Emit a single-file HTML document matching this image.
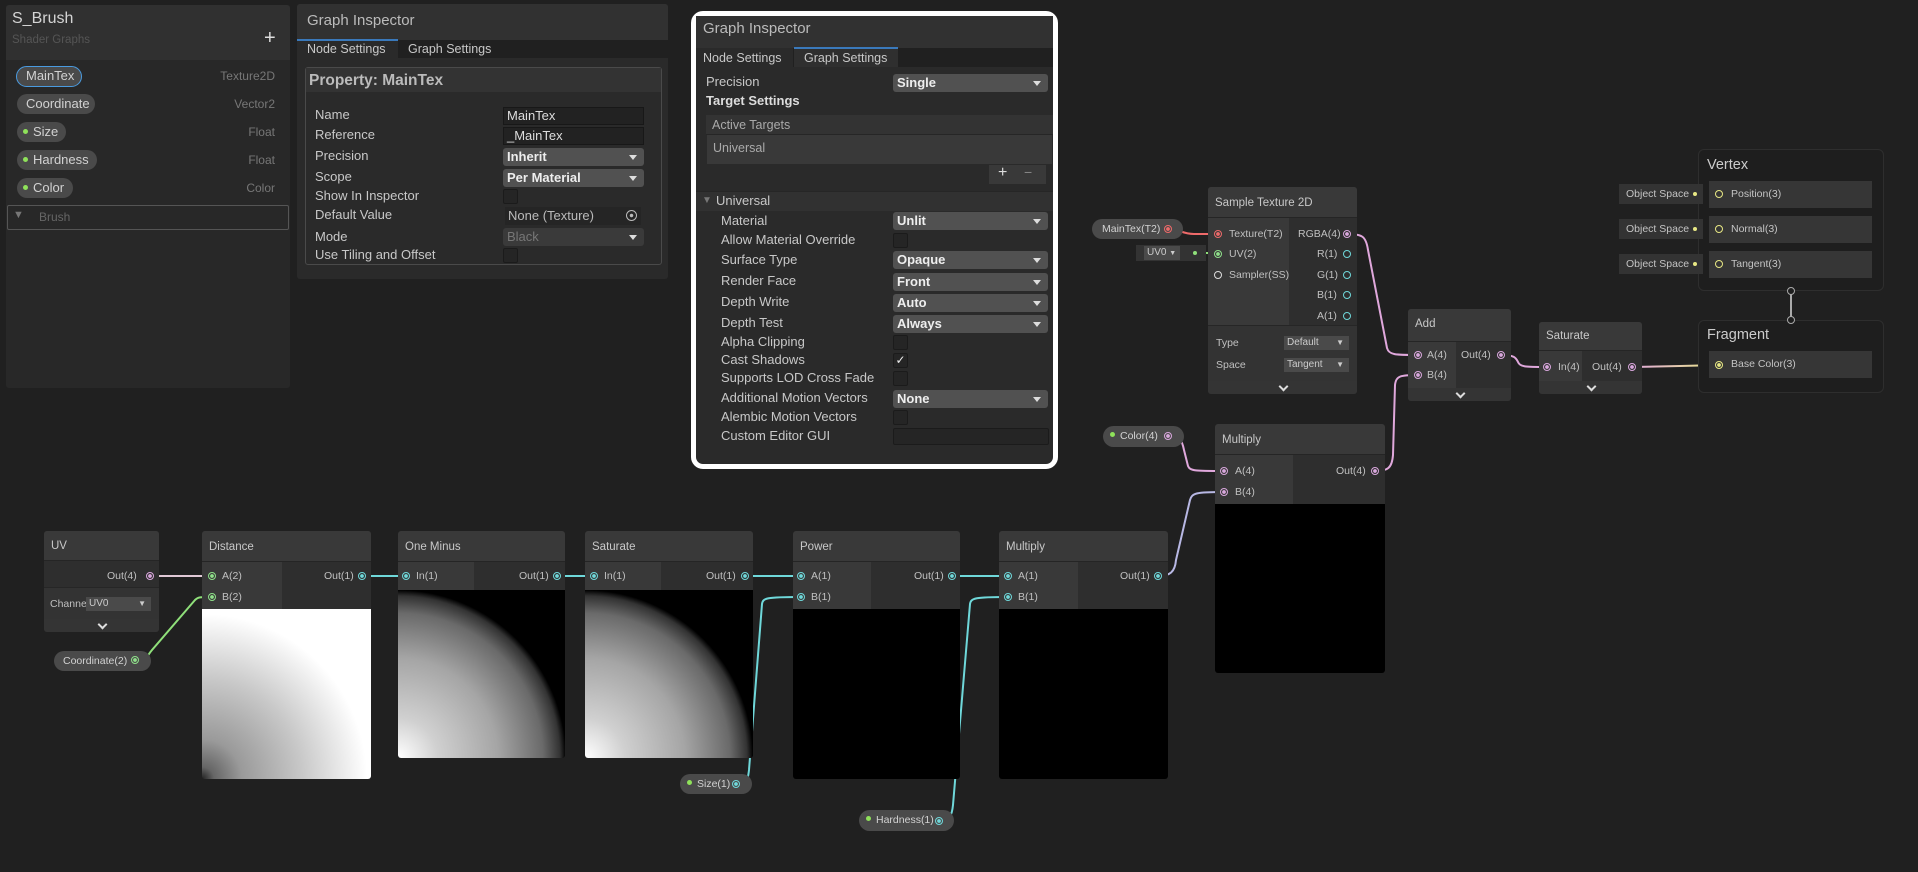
<!DOCTYPE html>
<html><head><meta charset="utf-8"><style>
*{box-sizing:border-box;margin:0;padding:0}
body{width:1918px;height:872px;background:#202020;font-family:"Liberation Sans",sans-serif;position:relative;overflow:hidden;color:#c4c4c4}
.a{position:absolute}
.t{position:absolute;white-space:nowrap}
.pill{position:absolute;background:#4a4a4a;border-radius:12px;color:#d2d2d2;font-size:13px;line-height:20px;padding-left:9px}
.pill b{display:inline-block;width:5px;height:5px;border-radius:50%;background:#8fe25a;margin-right:5px;vertical-align:2px}
.dd{position:absolute;background:#515151;border-radius:3px;color:#eee;font-weight:bold;font-size:13px;line-height:18px;padding-left:4px;height:18px}
.dd:after{content:"";position:absolute;right:7px;top:7px;border-left:4px solid transparent;border-right:4px solid transparent;border-top:5px solid #ddd}
.cb{position:absolute;width:15px;height:15px;background:#252525;border:1px solid #1b1b1b;border-radius:2px}
.lab{position:absolute;font-size:13px;color:#c8c8c8;white-space:nowrap}
.node{position:absolute;background:#2e2e2e;border-radius:3px;overflow:hidden}
.hd{position:absolute;left:0;right:0;top:0;background:#393939;font-size:11.5px;color:#c8c8c8;padding:13px 0 0 7px;border-bottom:1px solid #252525}
.in{position:absolute;background:#393939}
.nl{position:absolute;font-size:10.5px;color:#c0c0c0;white-space:nowrap}
.p{position:absolute;width:8px;height:8px;border:1.5px solid currentColor;border-radius:50%;background:radial-gradient(circle,currentColor 0 1.6px,transparent 2.2px)}
.pk{color:#d9a7dd}.cy{color:#6fd8da}.gr{color:#8fe08a}.rd{color:#ee6a6a}.ye{color:#e8e884}.wh{color:#ddd}
.chev{position:absolute;left:0;right:0;background:#343434;height:13px}
.chev:after{content:"";position:absolute;left:50%;top:2px;width:5px;height:5px;margin-left:-3px;border-right:2px solid #ddd;border-bottom:2px solid #ddd;transform:rotate(45deg)}
.os{position:absolute;background:#333;color:#c4c4c4;font-size:10.5px;line-height:20px;padding-left:7px;width:84px;height:20px}
.os:after{content:"";position:absolute;right:6px;top:8px;width:4px;height:4px;border-radius:50%;background:#e8e884}
.slot{position:absolute;background:#363636;left:1709px;width:163px;height:27px;font-size:10.5px;color:#c4c4c4;line-height:27px;padding-left:22px}
</style></head><body>

<svg class="a" style="left:0;top:0" width="1918" height="872" fill="none" stroke-width="2">
<path d="M150 576 L212 576" stroke="#e0c9d6"/>
<path d="M135 660 C148 660 146 657 152 650 L195 600 C198 597 200 597 212 597" stroke="#8fe07a"/>
<path d="M362 576 L406 576 M557 576 L594 576 M745 576 L801 576 M952 576 L1008 576" stroke="#6fd8da"/>
<path d="M736 784 C748 784 748 778 749 770 L762 604 C763 598 766 597 801 597" stroke="#6fd8da"/>
<path d="M939 821 C950 821 952 815 953 805 L970 604 C971 598 975 597 1008 597" stroke="#6fd8da"/>
<path d="M1158 576 C1170 576 1175 572 1176 560 L1190 500 C1192 493 1196 492 1224 492" stroke="#b8b8e4"/>
<path d="M1168 436 C1180 436 1182 440 1184 450 L1188 466 C1190 471 1195 471 1224 471" stroke="#e0a8dc"/>
<path d="M1375 471 C1388 471 1392 468 1393 455 L1395 385 C1396 376 1400 375 1418 375" stroke="#e0a8dc"/>
<path d="M1347 234 C1362 234 1366 236 1368 250 L1387 348 C1389 355 1395 355 1418 355" stroke="#e0a8dc"/>
<path d="M1168 229 C1180 229 1182 234 1194 234 L1218 234" stroke="#ee6a6a"/>
<path d="M1195 253 L1218 253" stroke="#8fe07a"/>
<path d="M1501 355 C1515 355 1516 358 1518 362 C1520 367 1525 367 1547 367" stroke="#e0a8dc"/>
<defs><linearGradient id="g1" x1="0" x2="1"><stop offset="0" stop-color="#e0a8dc"/><stop offset="1" stop-color="#e8e884"/></linearGradient></defs>
<path d="M1632 367 L1680 366 L1719 365" stroke="url(#g1)"/>
<path d="M1697 194 H1719 M1697 229 H1719 M1697 264 H1719" stroke="#e8e884"/>
<path d="M1791 292 V319" stroke="#aaa"/>
</svg>

<!-- Left blackboard -->
<div class="a" style="left:6px;top:5px;width:284px;height:383px;background:#282828;border-radius:3px"></div>
<div class="a" style="left:6px;top:5px;width:284px;height:55px;background:#303030;border-radius:3px 3px 0 0"></div>
<div class="t" style="left:12px;top:10px;font-size:16px;color:#d4d4d4">S_Brush</div>
<div class="t" style="left:12px;top:34px;font-size:11.5px;color:#555">Shader Graphs</div>
<div class="t" style="left:264px;top:27px;font-size:20px;color:#ddd">+</div>
<div class="pill" style="left:16px;top:66px;width:66px;height:21px;border:1.5px solid #4a9be0;line-height:18px">MainTex</div>
<div class="t" style="right:1643px;top:69px;font-size:12px;color:#777">Texture2D</div>
<div class="pill" style="left:17px;top:94px;width:78px">Coordinate</div>
<div class="t" style="right:1643px;top:97px;font-size:12px;color:#777">Vector2</div>
<div class="pill" style="left:17px;top:122px;width:49px;padding-left:6px"><b></b>Size</div>
<div class="t" style="right:1643px;top:125px;font-size:12px;color:#777">Float</div>
<div class="pill" style="left:17px;top:150px;width:80px;padding-left:6px"><b></b>Hardness</div>
<div class="t" style="right:1643px;top:153px;font-size:12px;color:#777">Float</div>
<div class="pill" style="left:17px;top:178px;width:56px;padding-left:6px"><b></b>Color</div>
<div class="t" style="right:1643px;top:181px;font-size:12px;color:#777">Color</div>
<div class="a" style="left:7px;top:205px;width:282px;height:25px;border:1px solid #555;border-radius:2px"></div>
<div class="t" style="left:13px;top:209px;font-size:11px;color:#777">▼</div>
<div class="t" style="left:39px;top:210px;font-size:12px;color:#666">Brush</div>

<!-- Inspector 1 -->
<div class="a" style="left:297px;top:4px;width:371px;height:275px;background:#2a2a2a;border-radius:3px"></div>
<div class="a" style="left:297px;top:4px;width:371px;height:36px;background:#313131;border-radius:3px 3px 0 0"></div>
<div class="t" style="left:307px;top:12px;font-size:15px;color:#bbb">Graph Inspector</div>
<div class="a" style="left:297px;top:40px;width:371px;height:18px;background:#202020"></div>
<div class="a" style="left:297px;top:39px;width:101px;height:19px;background:#2a2a2a;border-top:2px solid #3a79bb"></div>
<div class="t" style="left:307px;top:42px;font-size:12.5px;color:#c8c8c8">Node Settings</div>
<div class="t" style="left:408px;top:42px;font-size:12.5px;color:#c8c8c8">Graph Settings</div>
<div class="a" style="left:305px;top:67px;width:357px;height:198px;border:1px solid #4a4a4a;border-radius:3px"></div>
<div class="a" style="left:306px;top:68px;width:355px;height:24px;background:#333"></div>
<div class="t" style="left:309px;top:72px;font-size:15.5px;font-weight:bold;color:#bbb">Property: MainTex</div>
<div class="lab" style="left:315px;top:107px">Name</div>
<div class="a" style="left:503px;top:107px;width:141px;height:18px;background:#222;border:1px solid #181818;font-size:13px;color:#ddd;padding-left:3px;line-height:16px">MainTex</div>
<div class="lab" style="left:315px;top:127px">Reference</div>
<div class="a" style="left:503px;top:127px;width:141px;height:18px;background:#222;border:1px solid #181818;font-size:13px;color:#ddd;padding-left:3px;line-height:16px">_MainTex</div>
<div class="lab" style="left:315px;top:148px">Precision</div>
<div class="dd" style="left:503px;top:148px;width:141px">Inherit</div>
<div class="lab" style="left:315px;top:169px">Scope</div>
<div class="dd" style="left:503px;top:169px;width:141px">Per Material</div>
<div class="lab" style="left:315px;top:188px">Show In Inspector</div>
<div class="cb" style="left:503px;top:189px"></div>
<div class="lab" style="left:315px;top:207px">Default Value</div>
<div class="a" style="left:505px;top:207px;width:136px;height:18px;background:#252525;font-size:13px;color:#bbb;padding-left:3px;line-height:18px">None (Texture)<span style="position:absolute;right:4px;top:3px;width:11px;height:11px;border:1.5px solid #bbb;border-radius:50%;background:radial-gradient(circle,#bbb 0 1.5px,transparent 2px)"></span></div>
<div class="lab" style="left:315px;top:229px">Mode</div>
<div class="dd" style="left:503px;top:228px;width:141px;background:#3a3a3a;color:#777;font-weight:normal"></div>
<div class="t" style="left:507px;top:229px;font-size:13px;color:#777">Black</div>
<div class="lab" style="left:315px;top:247px">Use Tiling and Offset</div>
<div class="cb" style="left:503px;top:248px"></div>

<!-- Inspector 2 (highlighted) -->
<div class="a" style="left:691px;top:11px;width:367px;height:458px;border:5px solid #fff;border-radius:12px;background:#2a2a2a;overflow:hidden">
</div>
<div class="a" style="left:696px;top:16px;width:357px;height:32px;background:#313131"></div>
<div class="t" style="left:703px;top:20px;font-size:15px;color:#bbb">Graph Inspector</div>
<div class="a" style="left:696px;top:48px;width:357px;height:19px;background:#202020"></div>
<div class="a" style="left:696px;top:48px;width:97px;height:19px;background:#2a2a2a"></div>
<div class="a" style="left:794px;top:47px;width:104px;height:20px;background:#2f2f2f;border-top:2px solid #3a79bb"></div>
<div class="t" style="left:703px;top:51px;font-size:12.5px;color:#c8c8c8">Node Settings</div>
<div class="t" style="left:804px;top:51px;font-size:12.5px;color:#c8c8c8">Graph Settings</div>
<div class="lab" style="left:706px;top:74px">Precision</div>
<div class="dd" style="left:893px;top:74px;width:155px">Single</div>
<div class="lab" style="left:706px;top:93px;font-weight:bold;color:#ddd">Target Settings</div>
<div class="a" style="left:706px;top:115px;width:347px;height:50px;background:#393939;border:1px solid #2a2a2a"></div>
<div class="a" style="left:706px;top:115px;width:347px;height:20px;background:#333;border-bottom:1px solid #262626"></div>
<div class="t" style="left:712px;top:118px;font-size:12.5px;color:#aaa">Active Targets</div>
<div class="t" style="left:713px;top:141px;font-size:12.5px;color:#aaa">Universal</div>
<div class="a" style="left:989px;top:165px;width:57px;height:19px;background:#393939"></div>
<div class="t" style="left:998px;top:164px;font-size:16px;color:#ddd">+</div>
<div class="t" style="left:1024px;top:164px;font-size:14px;color:#888">−</div>
<div class="a" style="left:696px;top:191px;width:357px;height:20px;background:#313131;border-top:1px solid #262626"></div>
<div class="t" style="left:702px;top:195px;font-size:10px;color:#777">▼</div>
<div class="lab" style="left:716px;top:193px">Universal</div>
<div class="lab" style="left:721px;top:213px">Material</div><div class="dd" style="left:893px;top:212px;width:155px">Unlit</div>
<div class="lab" style="left:721px;top:232px">Allow Material Override</div><div class="cb" style="left:893px;top:233px"></div>
<div class="lab" style="left:721px;top:252px">Surface Type</div><div class="dd" style="left:893px;top:251px;width:155px">Opaque</div>
<div class="lab" style="left:721px;top:273px">Render Face</div><div class="dd" style="left:893px;top:273px;width:155px">Front</div>
<div class="lab" style="left:721px;top:294px">Depth Write</div><div class="dd" style="left:893px;top:294px;width:155px">Auto</div>
<div class="lab" style="left:721px;top:315px">Depth Test</div><div class="dd" style="left:893px;top:315px;width:155px">Always</div>
<div class="lab" style="left:721px;top:334px">Alpha Clipping</div><div class="cb" style="left:893px;top:335px"></div>
<div class="lab" style="left:721px;top:352px">Cast Shadows</div><div class="cb" style="left:893px;top:353px;color:#eee;font-size:12px;line-height:13px;text-align:center">✓</div>
<div class="lab" style="left:721px;top:370px">Supports LOD Cross Fade</div><div class="cb" style="left:893px;top:371px"></div>
<div class="lab" style="left:721px;top:390px">Additional Motion Vectors</div><div class="dd" style="left:893px;top:390px;width:155px">None</div>
<div class="lab" style="left:721px;top:409px">Alembic Motion Vectors</div><div class="cb" style="left:893px;top:410px"></div>
<div class="lab" style="left:721px;top:428px">Custom Editor GUI</div>
<div class="a" style="left:893px;top:428px;width:156px;height:17px;background:#252525;border:1px solid #1b1b1b;border-radius:2px"></div>

<!-- Sample Texture 2D -->
<div class="node" style="left:1208px;top:187px;width:149px;height:207px">
<div class="hd" style="height:31px;padding-top:10px">Sample Texture 2D</div>
<div class="in" style="left:0;top:31px;width:81px;height:107px"></div>
<div class="a" style="left:0;top:138px;width:149px;height:56px;background:#333;border-top:1px solid #262626"></div>
<div class="chev" style="top:194px"></div>
</div>
<div class="p rd" style="left:1214px;top:230px"></div><div class="nl" style="left:1229px;top:228px">Texture(T2)</div>
<div class="p gr" style="left:1214px;top:250px"></div><div class="nl" style="left:1229px;top:248px">UV(2)</div>
<div class="p wh" style="left:1214px;top:271px;background:none"></div><div class="nl" style="left:1229px;top:269px">Sampler(SS)</div>
<div class="nl" style="left:1298px;top:228px">RGBA(4)</div><div class="p pk" style="left:1343px;top:230px"></div>
<div class="nl" style="left:1317px;top:248px">R(1)</div><div class="p cy" style="left:1343px;top:250px;background:none"></div>
<div class="nl" style="left:1317px;top:269px">G(1)</div><div class="p cy" style="left:1343px;top:271px;background:none"></div>
<div class="nl" style="left:1317px;top:289px">B(1)</div><div class="p cy" style="left:1343px;top:291px;background:none"></div>
<div class="nl" style="left:1317px;top:310px">A(1)</div><div class="p cy" style="left:1343px;top:312px;background:none"></div>
<div class="nl" style="left:1216px;top:337px">Type</div>
<div class="a" style="left:1284px;top:336px;width:65px;height:14px;background:#4a4a4a;font-size:10px;color:#ccc;padding-left:3px;line-height:14px">Default<span style="position:absolute;right:5px;top:0;font-size:8px">▼</span></div>
<div class="nl" style="left:1216px;top:359px">Space</div>
<div class="a" style="left:1284px;top:358px;width:65px;height:14px;background:#4a4a4a;font-size:10px;color:#ccc;padding-left:3px;line-height:14px">Tangent<span style="position:absolute;right:5px;top:0;font-size:8px">▼</span></div>

<div class="pill" style="left:1092px;top:219px;width:91px;height:20px;font-size:10.5px;padding-left:10px">MainTex(T2)</div>
<div class="p rd" style="left:1164px;top:225px"></div>
<div class="a" style="left:1136px;top:245px;width:70px;height:16px;background:#333"></div>
<div class="a" style="left:1144px;top:246px;width:36px;height:14px;background:#4a4a4a;font-size:10px;color:#ccc;padding-left:3px;line-height:14px">UV0 <span style="font-size:7px">▼</span></div>
<div class="a" style="left:1193px;top:251px;width:4px;height:4px;border-radius:50%;background:#8fe07a"></div>

<!-- Add -->
<div class="node" style="left:1408px;top:309px;width:103px;height:92px">
<div class="hd" style="height:33px;padding-top:9px">Add</div>
<div class="in" style="left:0;top:33px;width:48px;height:46px"></div>
<div class="chev" style="top:79px"></div>
</div>
<div class="p pk" style="left:1414px;top:351px"></div><div class="nl" style="left:1427px;top:349px">A(4)</div>
<div class="p pk" style="left:1414px;top:371px"></div><div class="nl" style="left:1427px;top:369px">B(4)</div>
<div class="nl" style="left:1461px;top:349px">Out(4)</div><div class="p pk" style="left:1497px;top:351px"></div>

<!-- Saturate right -->
<div class="node" style="left:1539px;top:322px;width:103px;height:72px">
<div class="hd" style="height:29px;padding-top:8px">Saturate</div>
<div class="in" style="left:0;top:29px;width:43px;height:30px"></div>
<div class="chev" style="top:59px"></div>
</div>
<div class="p pk" style="left:1543px;top:363px"></div><div class="nl" style="left:1558px;top:361px">In(4)</div>
<div class="nl" style="left:1592px;top:361px">Out(4)</div><div class="p pk" style="left:1628px;top:363px"></div>

<!-- Vertex / Fragment -->
<div class="a" style="left:1698px;top:149px;width:186px;height:142px;background:#1e1e1e;border:1px solid #2e2e2e;border-radius:6px"></div>
<div class="t" style="left:1707px;top:157px;font-size:14.5px;color:#ccc">Vertex</div>
<div class="slot" style="top:181px">Position(3)</div>
<div class="slot" style="top:216px">Normal(3)</div>
<div class="slot" style="top:251px">Tangent(3)</div>
<div class="p ye" style="left:1715px;top:190px;background:none"></div>
<div class="p ye" style="left:1715px;top:225px;background:none"></div>
<div class="p ye" style="left:1715px;top:260px;background:none"></div>
<div class="os" style="left:1619px;top:184px">Object Space</div>
<div class="os" style="left:1619px;top:219px">Object Space</div>
<div class="os" style="left:1619px;top:254px">Object Space</div>
<div class="a" style="left:1787px;top:287px;width:8px;height:8px;border:1.5px solid #aaa;border-radius:50%;background:#1e1e1e"></div>
<div class="a" style="left:1698px;top:320px;width:186px;height:73px;background:#1e1e1e;border:1px solid #2e2e2e;border-radius:6px"></div>
<div class="a" style="left:1787px;top:316px;width:8px;height:8px;border:1.5px solid #aaa;border-radius:50%;background:#1e1e1e"></div>
<div class="t" style="left:1707px;top:327px;font-size:14.5px;color:#ccc">Fragment</div>
<div class="slot" style="top:351px">Base Color(3)</div>
<div class="p ye" style="left:1715px;top:361px"></div>

<!-- Color pill + Multiply top -->
<div class="pill" style="left:1103px;top:426px;width:81px;height:21px;font-size:10.5px;padding-left:7px"><b></b>Color(4)</div>
<div class="p pk" style="left:1164px;top:432px"></div>
<div class="node" style="left:1215px;top:424px;width:170px;height:249px;background:#000">
<div class="a" style="left:0;top:0;width:170px;height:80px;background:#2e2e2e"></div>
<div class="hd" style="height:31px;padding-top:10px">Multiply</div>
<div class="in" style="left:0;top:31px;width:78px;height:49px"></div>
</div>
<div class="p pk" style="left:1220px;top:467px"></div><div class="nl" style="left:1235px;top:465px">A(4)</div>
<div class="p pk" style="left:1220px;top:488px"></div><div class="nl" style="left:1235px;top:486px">B(4)</div>
<div class="nl" style="left:1336px;top:465px">Out(4)</div><div class="p pk" style="left:1371px;top:467px"></div>

<!-- UV -->
<div class="node" style="left:44px;top:531px;width:115px;height:101px">
<div class="hd" style="height:30px;padding-top:9px">UV</div>
<div class="a" style="left:0;top:56px;width:115px;height:32px;background:#333;border-top:1px solid #262626"></div>
<div class="chev" style="top:88px"></div>
</div>
<div class="nl" style="left:107px;top:570px">Out(4)</div><div class="p pk" style="left:146px;top:572px"></div>
<div class="nl" style="left:50px;top:598px">Channe</div>
<div class="a" style="left:86px;top:597px;width:65px;height:14px;background:#4a4a4a;font-size:10px;color:#ccc;padding-left:3px;line-height:14px">UV0<span style="position:absolute;right:5px;top:0;font-size:8px">▼</span></div>
<div class="pill" style="left:54px;top:651px;width:97px;height:20px;font-size:10.5px;padding-left:9px">Coordinate(2)</div>
<div class="p gr" style="left:131px;top:656px"></div>

<!-- Distance -->
<div class="node" style="left:202px;top:531px;width:169px;height:248px">
<div class="hd" style="height:31px;padding-top:10px">Distance</div>
<div class="in" style="left:0;top:31px;width:80px;height:47px"></div>
<div class="a" style="left:0;top:78px;width:169px;height:170px;background:radial-gradient(circle at 0 100%,#222 0,#666 12px,#9a9a9a 40px,#c8c8c8 100px,#fff 165px)"></div>
</div>
<div class="p gr" style="left:208px;top:572px"></div><div class="nl" style="left:222px;top:570px">A(2)</div>
<div class="p gr" style="left:208px;top:593px"></div><div class="nl" style="left:222px;top:591px">B(2)</div>
<div class="nl" style="left:324px;top:570px">Out(1)</div><div class="p cy" style="left:358px;top:572px"></div>

<!-- One Minus -->
<div class="node" style="left:398px;top:531px;width:167px;height:227px;background:#000">
<div class="a" style="left:0;top:0;width:167px;height:59px;background:#2e2e2e"></div>
<div class="hd" style="height:31px;padding-top:10px">One Minus</div>
<div class="in" style="left:0;top:31px;width:76px;height:28px"></div>
<div class="a" style="left:0;top:59px;width:167px;height:168px;background:radial-gradient(circle at 0 100%,#fff 0,#d0d0d0 40px,#a5a5a5 100px,#6a6a6a 145px,#333 162px,#000 168px)"></div>
</div>
<div class="p cy" style="left:402px;top:572px"></div><div class="nl" style="left:416px;top:570px">In(1)</div>
<div class="nl" style="left:519px;top:570px">Out(1)</div><div class="p cy" style="left:553px;top:572px"></div>

<!-- Saturate bottom -->
<div class="node" style="left:585px;top:531px;width:168px;height:227px;background:#000">
<div class="a" style="left:0;top:0;width:168px;height:59px;background:#2e2e2e"></div>
<div class="hd" style="height:31px;padding-top:10px">Saturate</div>
<div class="in" style="left:0;top:31px;width:76px;height:28px"></div>
<div class="a" style="left:0;top:59px;width:168px;height:168px;background:radial-gradient(circle at 0 100%,#fff 0,#d0d0d0 40px,#a5a5a5 100px,#6a6a6a 145px,#333 162px,#000 168px)"></div>
</div>
<div class="p cy" style="left:590px;top:572px"></div><div class="nl" style="left:604px;top:570px">In(1)</div>
<div class="nl" style="left:706px;top:570px">Out(1)</div><div class="p cy" style="left:741px;top:572px"></div>

<!-- Power -->
<div class="node" style="left:793px;top:531px;width:167px;height:248px;background:#000">
<div class="a" style="left:0;top:0;width:167px;height:78px;background:#2e2e2e"></div>
<div class="hd" style="height:31px;padding-top:10px">Power</div>
<div class="in" style="left:0;top:31px;width:78px;height:47px"></div>
</div>
<div class="p cy" style="left:797px;top:572px"></div><div class="nl" style="left:811px;top:570px">A(1)</div>
<div class="p cy" style="left:797px;top:593px"></div><div class="nl" style="left:811px;top:591px">B(1)</div>
<div class="nl" style="left:914px;top:570px">Out(1)</div><div class="p cy" style="left:948px;top:572px"></div>
<div class="pill" style="left:680px;top:774px;width:72px;height:20px;font-size:10.5px;padding-left:7px"><b></b>Size(1)</div>
<div class="p cy" style="left:732px;top:780px"></div>

<!-- Multiply bottom -->
<div class="node" style="left:999px;top:531px;width:169px;height:248px;background:#000">
<div class="a" style="left:0;top:0;width:169px;height:78px;background:#2e2e2e"></div>
<div class="hd" style="height:31px;padding-top:10px">Multiply</div>
<div class="in" style="left:0;top:31px;width:79px;height:47px"></div>
</div>
<div class="p cy" style="left:1004px;top:572px"></div><div class="nl" style="left:1018px;top:570px">A(1)</div>
<div class="p cy" style="left:1004px;top:593px"></div><div class="nl" style="left:1018px;top:591px">B(1)</div>
<div class="nl" style="left:1120px;top:570px">Out(1)</div><div class="p cy" style="left:1154px;top:572px"></div>
<div class="pill" style="left:859px;top:810px;width:95px;height:21px;font-size:10.5px;padding-left:7px"><b></b>Hardness(1)</div>
<div class="p cy" style="left:935px;top:817px"></div>

</body></html>
